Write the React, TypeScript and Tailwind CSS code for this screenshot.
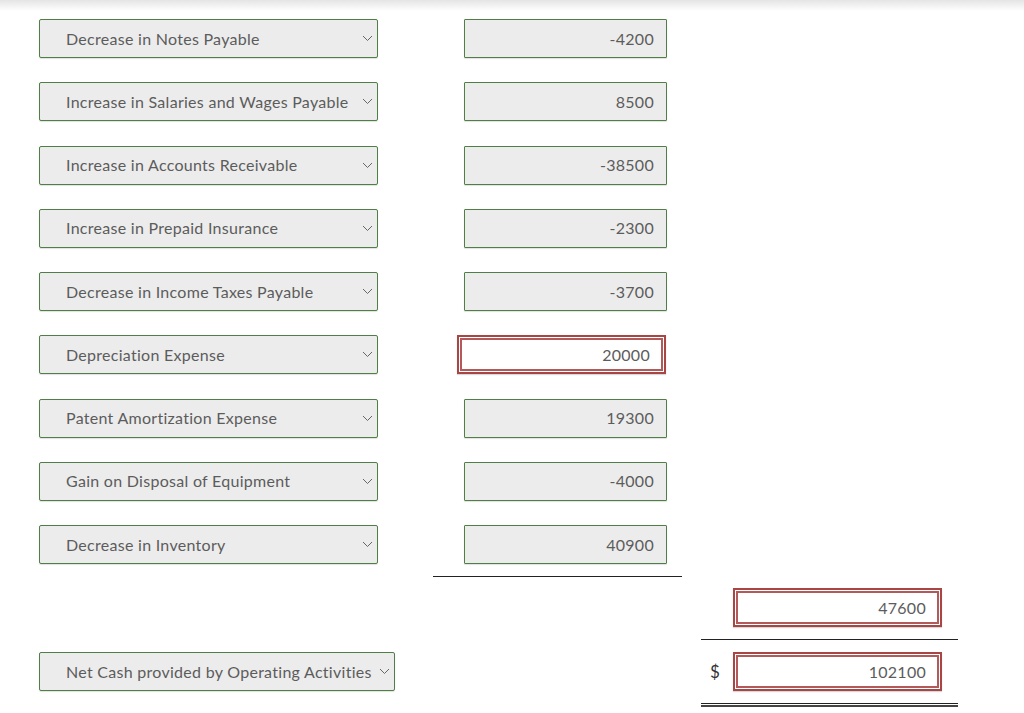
const rows = [
  { label: "Decrease in Notes Payable", value: "-4200" },
  { label: "Increase in Salaries and Wages Payable", value: "8500" },
  { label: "Increase in Accounts Receivable", value: "-38500" },
  { label: "Increase in Prepaid Insurance", value: "-2300" },
  { label: "Decrease in Income Taxes Payable", value: "-3700" },
  { label: "Depreciation Expense", value: "20000", bad: true },
  { label: "Patent Amortization Expense", value: "19300" },
  { label: "Gain on Disposal of Equipment", value: "-4000" },
  { label: "Decrease in Inventory", value: "40900" },
];

const Chevron = () => (
  <svg width="11" height="7" viewBox="0 0 11 7" className="shrink-0">
    <polyline points="1,1 5.5,5.5 10,1" fill="none" stroke="#666" strokeWidth="1" />
  </svg>
);

const Select = ({ label, width }: { label: string; width: string }) => (
  <div
    className={`flex h-[39px] ${width} items-center justify-between rounded-[2px] border border-[#4f7f44] bg-[#ececec] pl-[26px] pr-[4px] text-[16px] tracking-[0.28px] text-[#5c5c5c] shadow-[0_1px_1px_rgba(0,0,0,0.12)]`}
  >
    <span>{label}</span>
    <Chevron />
  </div>
);

const Field = ({ value }: { value: string }) => (
  <div className="flex h-[39px] w-[203px] items-center justify-end rounded-[1px] border border-[#4f7f44] bg-[#ececec] pr-[12px] text-[16px] tracking-[0.28px] text-[#5c5c5c] shadow-[0_1px_1px_rgba(0,0,0,0.12)]">
    {value}
  </div>
);

const BadField = ({ value, width }: { value: string; width: string }) => (
  <div className={`h-[39px] ${width} border-2 border-[#a84646] p-px shadow-[0_1px_1px_rgba(0,0,0,0.15)]`}>
    <div className="flex h-full items-center justify-end border-2 border-[#b25a5a] bg-white pr-[11px] text-[16px] tracking-[0.28px] text-[#5c5c5c]">
      {value}
    </div>
  </div>
);

export default function App() {
  return (
    <div
      className="min-h-[713px] w-[1024px] bg-[linear-gradient(#e4e4e4,#fff_11px)] pt-[19px]"
      style={{ fontFamily: "Lato, 'Noto Sans', sans-serif" }}
    >
      <div className="flex flex-col gap-[24.25px]">
        {rows.map((r) => (
          <div key={r.label} className="flex h-[39px] items-center">
            <div className="w-[433px] pl-[39px]">
              <Select label={r.label} width="w-[339px]" />
            </div>
            <div className="w-[249px]">
              {r.bad ? (
                <div className="pl-[24px]">
                  <BadField value={r.value} width="w-[209px]" />
                </div>
              ) : (
                <div className="pl-[31px]">
                  <Field value={r.value} />
                </div>
              )}
            </div>
          </div>
        ))}
      </div>

      <div className="ml-[433px] mt-[12px] h-px w-[249px] bg-[#222]" />

      <div className="mt-[11px] flex">
        <div className="w-[701px]" />
        <div className="w-[257px] pl-[32px]">
          <BadField value="47600" width="w-[209px]" />
        </div>
      </div>

      <div className="ml-[701px] mt-[12px] h-px w-[257px] bg-[#222]" />

      <div className="mt-[12px] flex items-center">
        <div className="w-[701px] pl-[39px]">
          <Select label="Net Cash provided by Operating Activities" width="w-[356px]" />
        </div>
        <div className="flex w-[257px] items-center">
          <span className="w-[32px] pl-[9px] text-[17px] text-[#333]">$</span>
          <BadField value="102100" width="w-[209px]" />
        </div>
      </div>

      <div className="ml-[701px] mt-[12px] flex w-[257px] flex-col gap-[1px]">
        <div className="h-px bg-[#222]" />
        <div className="h-[2px] bg-[#444]" />
      </div>
    </div>
  );
}
